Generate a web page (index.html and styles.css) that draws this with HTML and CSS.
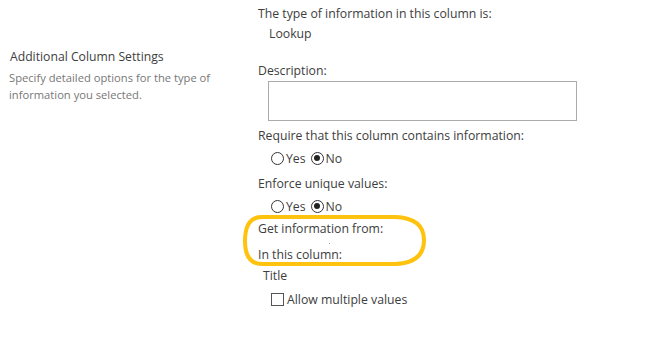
FILE: index.html
```html
<!DOCTYPE html>
<html>
<head>
<meta charset="utf-8">
<link rel="stylesheet" href="styles.css">
</head>
<body>
<div class="page">
  <div class="side">
    <div class="side-title">Additional Column Settings</div>
    <div class="side-desc">Specify detailed options for the type of information you selected.</div>
  </div>
  <div class="form">
    <div class="label">The type of information in this column is:</div>
    <div class="value">Lookup</div>
    <div class="label gap-desc">Description:</div>
    <div class="textarea"></div>
    <div class="label gap-req">Require that this column contains information:</div>
    <div class="radios">
      <span class="radio"></span><span class="opt">Yes</span>
      <span class="radio checked"></span><span class="opt">No</span>
    </div>
    <div class="label gap-enf">Enforce unique values:</div>
    <div class="radios">
      <span class="radio"></span><span class="opt">Yes</span>
      <span class="radio checked"></span><span class="opt">No</span>
    </div>
    <div class="label gap-get">Get information from:</div>
    <div class="spacer"><span class="dot"></span></div>
    <div class="label">In this column:</div>
    <div class="value title">Title</div>
    <div class="check-row"><span class="checkbox"></span><span class="opt">Allow multiple values</span></div>
  </div>
</div>
<svg class="highlight" width="647" height="338" viewBox="0 0 647 338">
  <path d="M262 217 L395 217 Q424 218 424 240 Q424 263 395 264 L262 264 Q245 264 245 241 Q245 217 262 217 Z" fill="none" stroke="#ffc20e" stroke-width="4"/>
</svg>
</body>
</html>
```
FILE: styles.css
```css
html, body {
  margin: 0;
  padding: 0;
  background: #fff;
}
body {
  font-family: "Open Sans", "Liberation Sans", sans-serif;
  color: #3d3d3d;
  width: 647px;
  height: 338px;
  overflow: hidden;
  position: relative;
}
.page {
  display: flex;
}
.side {
  width: 249px;
  padding-left: 9px;
  padding-top: 47px;
  box-sizing: border-box;
}
.side-title {
  font-size: 12.2px;
  line-height: 20px;
  padding-left: 1px;
}
.side-desc {
  margin-top: 2px;
  font-size: 11.2px;
  line-height: 17px;
  color: #777;
  width: 225px;
}
.form {
  padding-top: 4px;
  padding-left: 9px;
}
.label {
  font-size: 12.25px;
  line-height: 20px;
  white-space: nowrap;
}
.value {
  font-size: 12.25px;
  line-height: 20px;
  margin-left: 11px;
}
.gap-desc { margin-top: 17px; }
.gap-req { margin-top: 5px; }
.gap-enf { margin-top: 6px; }
.gap-get { margin-top: 3px; }
.textarea {
  margin-left: 10px;
  width: 309px;
  height: 40px;
  border: 1px solid #ababab;
  box-sizing: border-box;
}
.radios, .check-row {
  margin-top: 2px;
  margin-left: 13px;
  height: 20px;
  display: flex;
  align-items: center;
  font-size: 12.25px;
}
.radio {
  width: 13px;
  height: 13px;
  border: 1px solid #333;
  border-radius: 50%;
  box-sizing: border-box;
  position: relative;
  margin-right: 2px;
}
.radio.checked::after {
  content: "";
  position: absolute;
  left: 2.5px;
  top: 2.5px;
  width: 6px;
  height: 6px;
  border-radius: 50%;
  background: #222;
}
.opt {
  margin-right: 5px;
}
.spacer {
  height: 6px;
  position: relative;
}
.dot {
  position: absolute;
  left: 71px;
  top: 4px;
  width: 1px;
  height: 1px;
  background: #999;
}
.title {
  margin-left: 5px;
  margin-top: 1px;
}
.check-row {
  margin-top: 3px;
}
.checkbox {
  width: 13px;
  height: 13px;
  border: 1px solid #555;
  box-sizing: border-box;
  margin-right: 3px;
}
.highlight {
  position: absolute;
  left: 0;
  top: 0;
  pointer-events: none;
}
```
